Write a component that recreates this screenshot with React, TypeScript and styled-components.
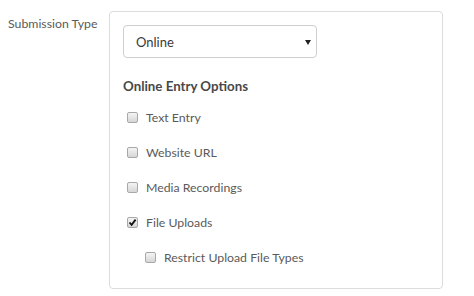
import React from "react";
import styled, { createGlobalStyle } from "styled-components";

const Global = createGlobalStyle`
  html, body { margin: 0; padding: 0; background: #fff; }
  body { font-family: Lato, "Open Sans", Arial, sans-serif; }
`;

const Page = styled.div`
  display: flex;
  align-items: flex-start;
  width: 474px;
  height: 296px;
`;

const Label = styled.div`
  width: 101px;
  padding: 16px 0 0 8px;
  font-size: 12.3px;
  line-height: 16px;
  color: #5a5a5a;
`;

const Panel = styled.div`
  margin-top: 11px;
  box-sizing: border-box;
  width: 334px;
  height: 278px;
  border: 1px solid #dcdcdc;
  border-radius: 4px;
  padding: 13px;
  display: flex;
  flex-direction: column;
`;

const Select = styled.div`
  box-sizing: border-box;
  width: 194px;
  height: 33px;
  border: 1px solid #cfcfcf;
  border-radius: 4px;
  display: flex;
  align-items: center;
  justify-content: space-between;
  padding: 0 5px 0 12px;
  font-size: 13px;
  color: #3a3a3a;
`;

const Arrow = styled.span`
  width: 0;
  height: 0;
  border-left: 3px solid transparent;
  border-right: 3px solid transparent;
  border-top: 5px solid #222;
  margin-top: 1px;
`;

const Heading = styled.div`
  margin-top: 18px;
  margin-bottom: 4px;
  font-size: 13.3px;
  line-height: 20px;
  font-weight: 700;
  color: #484848;
`;

const Row = styled.div<{ $indent?: boolean }>`
  height: 35px;
  display: flex;
  align-items: center;
  padding-left: ${(p) => (p.$indent ? "22px" : "4px")};
  font-size: 12.3px;
  color: #5a5a5a;
`;

const Box = styled.span`
  box-sizing: border-box;
  width: 11px;
  height: 11px;
  border: 1px solid #a8a8a8;
  border-radius: 2px;
  background: linear-gradient(#f4f4f4, #d6d6d6);
  margin-right: 8px;
  display: flex;
  align-items: center;
  justify-content: center;
`;

const Check = ({ checked }: { checked?: boolean }) => (
  <Box>
    {checked && (
      <svg width="9" height="9" viewBox="0 0 9 9">
        <path d="M1.5 4.5 L3.6 6.8 L7.6 1.6" fill="none" stroke="#111" strokeWidth="1.8" />
      </svg>
    )}
  </Box>
);

const options: { label: string; checked?: boolean; indent?: boolean }[] = [
  { label: "Text Entry" },
  { label: "Website URL" },
  { label: "Media Recordings" },
  { label: "File Uploads", checked: true },
  { label: "Restrict Upload File Types", indent: true },
];

export default function App() {
  return (
    <>
      <Global />
      <Page>
        <Label>Submission Type</Label>
        <Panel>
          <Select>
            <span>Online</span>
            <Arrow />
          </Select>
          <Heading>Online Entry Options</Heading>
          {options.map((o) => (
            <Row key={o.label} $indent={o.indent}>
              <Check checked={o.checked} />
              {o.label}
            </Row>
          ))}
        </Panel>
      </Page>
    </>
  );
}
